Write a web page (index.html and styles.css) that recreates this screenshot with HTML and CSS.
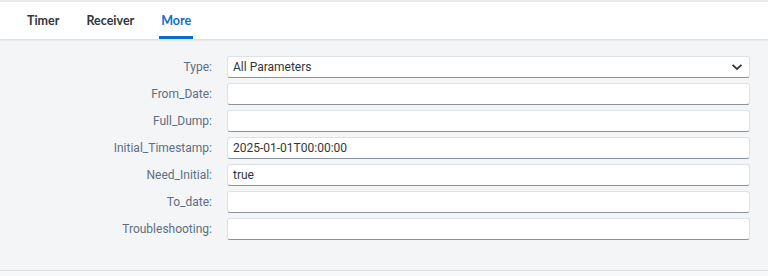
FILE: index.html
```html
<!DOCTYPE html>
<html>
<head>
<meta charset="utf-8">
<link rel="stylesheet" href="styles.css">
</head>
<body>
<div class="page">
  <div class="topline"></div>
  <nav class="tabs">
    <div class="tab">Timer</div>
    <div class="tab">Receiver</div>
    <div class="tab active">More</div>
  </nav>
  <div class="content">
    <div class="form">
      <label class="lbl">Type:</label>
      <div class="field select"><span>All Parameters</span>
        <svg class="chev" width="12" height="8" viewBox="0 0 12 8"><path d="M1.5 1.8 L6 6 L10.5 1.8" fill="none" stroke="#32363a" stroke-width="1.8"/></svg>
      </div>
      <label class="lbl">From_Date:</label>
      <div class="field"></div>
      <label class="lbl">Full_Dump:</label>
      <div class="field"></div>
      <label class="lbl">Initial_Timestamp:</label>
      <div class="field"><span>2025-01-01T00:00:00</span></div>
      <label class="lbl">Need_Initial:</label>
      <div class="field"><span>true</span></div>
      <label class="lbl">To_date:</label>
      <div class="field"></div>
      <label class="lbl">Troubleshooting:</label>
      <div class="field"></div>
    </div>
  </div>
  <div class="footer"></div>
</div>
</body>
</html>
```
FILE: styles.css
```css
html, body {
  margin: 0;
  padding: 0;
  background: #ffffff;
}
body {
  font-family: Roboto, "Liberation Sans", sans-serif;
  width: 768px;
  height: 276px;
  overflow: hidden;
}
.page {
  display: flex;
  flex-direction: column;
  height: 276px;
}
.topline {
  height: 2px;
  background: #ececec;
}
.tabs {
  display: flex;
  height: 37px;
  padding-left: 27px;
  background: #fff;
  box-shadow: 0 1px 2px rgba(0,0,0,0.12);
  position: relative;
  z-index: 1;
  font-family: Lato, "Liberation Sans", sans-serif;
}
.tab {
  font-size: 12.5px;
  font-weight: 700;
  color: #32363a;
  padding-top: 11px;
  margin-right: 27px;
  box-sizing: border-box;
}
.tab.active {
  color: #0a6ed1;
  border-bottom: 3px solid #0a6ed1;
  padding: 11px 2px 0;
  margin-left: -2px;
}
.content {
  background: #f4f5f6;
  height: 232px;
  border-bottom: 1px solid #dcdee0;
  box-sizing: border-box;
  padding-top: 17px;
}
.form {
  display: grid;
  grid-template-columns: 212px 523px;
  column-gap: 15px;
  row-gap: 5px;
  align-items: center;
}
.lbl {
  text-align: right;
  font-size: 12px;
  color: #5d6f82;
}
.field {
  height: 22px;
  box-sizing: border-box;
  background: #fff;
  border: 1px solid #dfe2e5;
  border-bottom: 1px solid #89939e;
  border-radius: 3px;
  display: flex;
  align-items: center;
  padding-left: 5px;
  font-size: 12px;
  color: #32363a;
}
.select {
  justify-content: space-between;
  padding-right: 6px;
}
.footer {
  flex: 1;
  background: #f7f8f9;
}
```
